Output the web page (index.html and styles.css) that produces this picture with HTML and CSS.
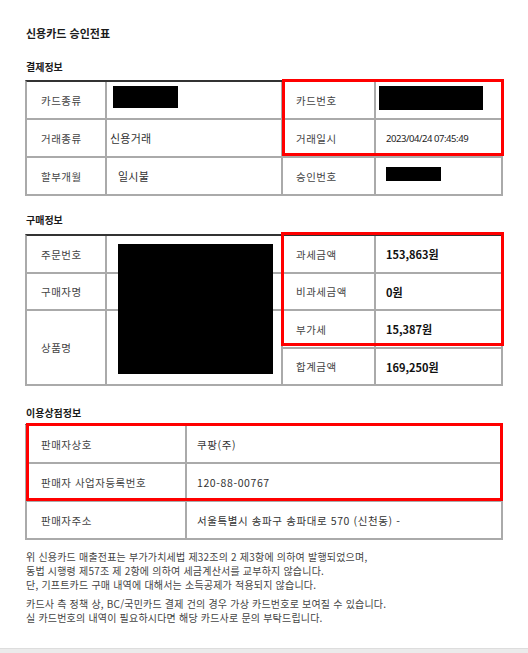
FILE: index.html
```html
<!DOCTYPE html>
<html lang="ko">
<head>
<meta charset="utf-8">
<title>신용카드 승인전표</title>
<link rel="stylesheet" href="styles.css">
</head>
<body>
<div class="page">
  <h1 class="title">신용카드 승인전표</h1>

  <h2 class="section-title first">결제정보</h2>
  <div class="sheet">
    <div class="grid grid-4">
      <div class="cell label">카드종류</div>
      <div class="cell value"><span class="redact redact-type"></span></div>
      <div class="cell label label-right">카드번호</div>
      <div class="cell value value-right"><span class="redact redact-card"></span></div>

      <div class="cell label">거래종류</div>
      <div class="cell value">신용거래</div>
      <div class="cell label label-right">거래일시</div>
      <div class="cell value value-right date">2023/04/24 07:45:49</div>

      <div class="cell label">할부개월</div>
      <div class="cell value indent">일시불</div>
      <div class="cell label label-right">승인번호</div>
      <div class="cell value value-right"><span class="redact redact-approval"></span></div>
    </div>
    <div class="highlight highlight-pay"></div>
  </div>

  <h2 class="section-title second">구매정보</h2>
  <div class="sheet">
    <div class="grid grid-4 grid-tight">
      <div class="cell label">주문번호</div>
      <div class="cell value"></div>
      <div class="cell label label-right">과세금액</div>
      <div class="cell value value-right amount">153,863원</div>

      <div class="cell label">구매자명</div>
      <div class="cell value"></div>
      <div class="cell label label-right">비과세금액</div>
      <div class="cell value value-right amount">0원</div>

      <div class="cell label span2">상품명</div>
      <div class="cell value span2"></div>
      <div class="cell label label-right">부가세</div>
      <div class="cell value value-right amount">15,387원</div>

      <div class="cell label label-right">합계금액</div>
      <div class="cell value value-right amount">169,250원</div>
    </div>
    <div class="redact redact-order"></div>
    <div class="highlight highlight-amount"></div>
  </div>

  <h2 class="section-title third">이용상점정보</h2>
  <div class="sheet">
    <div class="grid grid-2">
      <div class="cell label">판매자상호</div>
      <div class="cell value value-shop">쿠팡(주)</div>
      <div class="cell label">판매자 사업자등록번호</div>
      <div class="cell value value-shop">120-88-00767</div>
      <div class="cell label">판매자주소</div>
      <div class="cell value value-shop">서울특별시 송파구 송파대로 570 (신천동) -</div>
    </div>
    <div class="highlight highlight-shop"></div>
  </div>

  <div class="notes">
    <p>위 신용카드 매출전표는 부가가치세법 제32조의 2 제3항에 의하여 발행되었으며,<br>동법 시행령 제57조 제 2항에 의하여 세금계산서를 교부하지 않습니다.<br>단, 기프트카드 구매 내역에 대해서는 소득공제가 적용되지 않습니다.</p>
    <p>카드사 측 정책 상, BC/국민카드 결제 건의 경우 가상 카드번호로 보여질 수 있습니다.<br>실 카드번호의 내역이 필요하시다면 해당 카드사로 문의 부탁드립니다.</p>
  </div>
</div>
<div class="bottom-bar"></div>
</body>
</html>
```

FILE: styles.css
```css
* { box-sizing: border-box; }

html, body {
  margin: 0;
  padding: 0;
  background: #ffffff;
}

body {
  width: 528px;
  height: 653px;
  overflow: hidden;
  font-family: "Noto Sans CJK KR", "Noto Sans", sans-serif;
  color: #333333;
}

.page {
  height: 648px;
  padding: 25px 0 0 25px;
}

.title {
  margin: 0 0 0 1px;
  font-size: 11px;
  line-height: 16px;
  font-weight: 700;
  color: #1a1a1a;
}

.section-title {
  margin: 0 0 0 1px;
  font-size: 10px;
  line-height: 14px;
  font-weight: 700;
  color: #1a1a1a;
}

.section-title.first { margin-top: 19px; margin-bottom: 6px; }
.section-title.second { margin-top: 17px; margin-bottom: 7px; }
.section-title.third { margin-top: 20px; margin-bottom: 4px; }

.sheet {
  position: relative;
  width: 478px;
}

.grid {
  display: grid;
  gap: 2px;
  background: #aaaaaa;
  border: 2px solid #aaaaaa;
  border-top-color: #333333;
  grid-auto-rows: 36px;
}

.grid-tight { grid-template-rows: 36px 35px 36px 35px; }

.grid-4 { grid-template-columns: 78px 174px 91px 1fr; }
.grid-2 { grid-template-columns: 158px 1fr; }

.cell {
  background: #ffffff;
  display: flex;
  align-items: center;
  white-space: nowrap;
}

.label {
  padding-left: 14px;
  font-size: 10.5px;
  letter-spacing: 0.5px;
  color: #444444;
}

.label-right { padding-left: 13px; }

.value {
  padding-left: 3px;
  color: #333333;
  font-size: 11px;
  letter-spacing: 0.2px;
}

.value.indent { padding-left: 11px; }
.value-right { padding-left: 10px; }
.value-shop { padding-left: 10px; font-size: 10.5px; letter-spacing: 0.6px; }

.date {
  font-family: "Noto Sans", sans-serif;
  font-size: 9.5px;
  letter-spacing: -0.45px;
  color: #222222;
}

.amount {
  font-weight: 700;
  font-size: 11px;
  letter-spacing: 0;
  color: #111111;
}

.grid-4 .span2 { grid-row: 3 / span 2; }
.grid-4 .span2.label { grid-column: 1; }
.grid-4 .span2.value { grid-column: 2; }

.redact {
  display: inline-block;
  background: #000000;
}

.redact-type { width: 65px; height: 22px; margin-left: 3px; margin-top: -6px; }
.redact-card { width: 104px; height: 24px; margin-left: -7px; margin-top: -4px; }
.redact-approval { width: 55px; height: 14px; margin-top: -5px; }

.redact-order {
  position: absolute;
  left: 93px;
  top: 10px;
  width: 155px;
  height: 130px;
}

.highlight {
  position: absolute;
  border: 3px solid #ff0000;
  pointer-events: none;
}

.highlight-pay { left: 257px; top: -1px; width: 222px; height: 77px; }
.highlight-amount { left: 256px; top: -2px; width: 223px; height: 114px; }
.highlight-shop { left: 1px; top: -1px; width: 477px; height: 78px; }

.notes {
  margin: 10px 0 0 1px;
  font-size: 10px;
  line-height: 14px;
  color: #444444;
  letter-spacing: 0.2px;
}

.notes p { margin: 0; }
.notes p + p { margin-top: 5px; }

.bottom-bar {
  height: 5px;
  background: #ebebeb;
  border-top: 1px solid #dddddd;
}
```
